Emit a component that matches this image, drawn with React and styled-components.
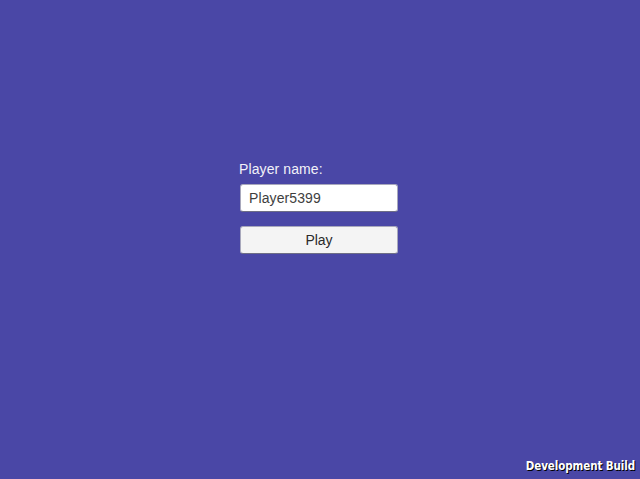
import React from 'react'
import styled, { createGlobalStyle } from 'styled-components'

const Global = createGlobalStyle`
  html, body {
    margin: 0;
    padding: 0;
    background: #4a47a6;
  }
  * { box-sizing: border-box; }
`

const Screen = styled.div`
  position: relative;
  width: 640px;
  height: 479px;
  background: #4a47a6;
  display: flex;
  flex-direction: column;
  align-items: flex-start;
  padding: 160px 0 0 239px;
  font-family: 'Liberation Sans', Arial, sans-serif;
`

const Form = styled.div`
  display: flex;
  flex-direction: column;
  width: 159px;
`

const Label = styled.label`
  color: #f2f2f8;
  font-size: 14px;
  letter-spacing: 0.1px;
  line-height: 18px;
  margin-bottom: 6px;
`

const Field = styled.input`
  width: 158px;
  height: 28px;
  margin-left: 1px;
  border: 1px solid #a8a8bc;
  border-bottom-color: #6e6e86;
  border-radius: 3px;
  background: #ffffff;
  color: #3e3e3e;
  font-family: 'Liberation Sans', Arial, sans-serif;
  font-size: 14px;
  letter-spacing: 0.1px;
  padding: 0 8px;
  outline: none;
`

const Button = styled.button`
  width: 158px;
  height: 28px;
  margin: 14px 0 0 1px;
  border: 1px solid #a8a8bc;
  border-bottom-color: #6e6e86;
  border-radius: 3px;
  background: #f4f4f4;
  color: #2a2a2a;
  font-family: 'Liberation Sans', Arial, sans-serif;
  font-size: 14px;
  cursor: pointer;
`

const Badge = styled.div`
  position: absolute;
  right: 5px;
  bottom: 6px;
  color: #ffffff;
  font-family: 'DejaVu Sans Condensed', 'DejaVu Sans', sans-serif;
  font-weight: bold;
  font-size: 11.5px;
  letter-spacing: -0.1px;
  text-shadow: 1px 1px 0 #000000;
`

export default function App() {
  return (
    <Screen>
      <Global />
      <Form>
        <Label>Player name:</Label>
        <Field defaultValue="Player5399" />
        <Button>Play</Button>
      </Form>
      <Badge>Development Build</Badge>
    </Screen>
  )
}
